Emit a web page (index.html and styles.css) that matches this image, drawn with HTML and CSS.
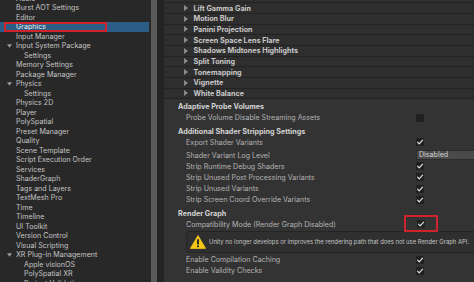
FILE: index.html
```html
<!DOCTYPE html>
<html>
<head>
<meta charset="utf-8">
<link rel="stylesheet" href="styles.css">
</head>
<body>
<nav class="sidebar">
  <ul class="tree">
    <li>Audio</li>
    <li>Burst AOT Settings</li>
    <li>Editor</li>
    <li class="sel"><span class="hl"></span>Graphics</li>
    <li>Input Manager</li>
    <li><svg class="tri" viewBox="0 0 6 4"><path d="M0 0h6L3 4z"/></svg>Input System Package</li>
    <li class="child">Settings</li>
    <li>Memory Settings</li>
    <li>Package Manager</li>
    <li><svg class="tri" viewBox="0 0 6 4"><path d="M0 0h6L3 4z"/></svg>Physics</li>
    <li class="child">Settings</li>
    <li>Physics 2D</li>
    <li>Player</li>
    <li>PolySpatial</li>
    <li>Preset Manager</li>
    <li>Quality</li>
    <li>Scene Template</li>
    <li>Script Execution Order</li>
    <li>Services</li>
    <li>ShaderGraph</li>
    <li>Tags and Layers</li>
    <li>TextMesh Pro</li>
    <li>Time</li>
    <li>Timeline</li>
    <li>UI Toolkit</li>
    <li>Version Control</li>
    <li>Visual Scripting</li>
    <li><svg class="tri" viewBox="0 0 6 4"><path d="M0 0h6L3 4z"/></svg>XR Plug-in Management</li>
    <li class="child">Apple visionOS</li>
    <li class="child">PolySpatial XR</li>
    <li class="child">Project Validation</li>
  </ul>
</nav>
<div class="scroll"><div class="thumb"></div></div>
<div class="gutter"></div>
<main class="main">
  <div class="folds">
    <div class="fold first"><svg class="rtri" viewBox="0 0 4 6"><path d="M0 0l4 3-4 3z"/></svg>Lens Distortion</div>
    <div class="fold"><svg class="rtri" viewBox="0 0 4 6"><path d="M0 0l4 3-4 3z"/></svg>Lift Gamma Gain</div>
    <div class="fold"><svg class="rtri" viewBox="0 0 4 6"><path d="M0 0l4 3-4 3z"/></svg>Motion Blur</div>
    <div class="fold"><svg class="rtri" viewBox="0 0 4 6"><path d="M0 0l4 3-4 3z"/></svg>Panini Projection</div>
    <div class="fold"><svg class="rtri" viewBox="0 0 4 6"><path d="M0 0l4 3-4 3z"/></svg>Screen Space Lens Flare</div>
    <div class="fold"><svg class="rtri" viewBox="0 0 4 6"><path d="M0 0l4 3-4 3z"/></svg>Shadows Midtones Highlights</div>
    <div class="fold"><svg class="rtri" viewBox="0 0 4 6"><path d="M0 0l4 3-4 3z"/></svg>Split Toning</div>
    <div class="fold"><svg class="rtri" viewBox="0 0 4 6"><path d="M0 0l4 3-4 3z"/></svg>Tonemapping</div>
    <div class="fold"><svg class="rtri" viewBox="0 0 4 6"><path d="M0 0l4 3-4 3z"/></svg>Vignette</div>
    <div class="fold"><svg class="rtri" viewBox="0 0 4 6"><path d="M0 0l4 3-4 3z"/></svg>White Balance</div>
  </div>

  <h3 class="head h1">Adaptive Probe Volumes</h3>
  <div class="row r-probe"><span class="lbl">Probe Volume Disable Streaming Assets</span><span class="cb"></span></div>

  <h3 class="head h2">Additional Shader Stripping Settings</h3>
  <div class="row r-export"><span class="lbl">Export Shader Variants</span><span class="cb"><svg viewBox="0 0 8 8"><path d="M1.6 4.2l1.6 1.6 3.4-3.6"/></svg></span></div>
  <div class="row r-log"><span class="lbl">Shader Variant Log Level</span><span class="dd">Disabled</span></div>
  <div class="row r11"><span class="lbl">Strip Runtime Debug Shaders</span><span class="cb"><svg viewBox="0 0 8 8"><path d="M1.6 4.2l1.6 1.6 3.4-3.6"/></svg></span></div>
  <div class="row r11"><span class="lbl">Strip Unused Post Processing Variants</span><span class="cb"><svg viewBox="0 0 8 8"><path d="M1.6 4.2l1.6 1.6 3.4-3.6"/></svg></span></div>
  <div class="row r11"><span class="lbl">Strip Unused Variants</span><span class="cb"><svg viewBox="0 0 8 8"><path d="M1.6 4.2l1.6 1.6 3.4-3.6"/></svg></span></div>
  <div class="row r11"><span class="lbl">Strip Screen Coord Override Variants</span><span class="cb"><svg viewBox="0 0 8 8"><path d="M1.6 4.2l1.6 1.6 3.4-3.6"/></svg></span></div>

  <h3 class="head h3">Render Graph</h3>
  <div class="row r-compat"><span class="lbl">Compatibility Mode (Render Graph Disabled)</span><span class="val"><span class="cb"><svg viewBox="0 0 8 8"><path d="M1.6 4.2l1.6 1.6 3.4-3.6"/></svg></span><span class="hl2"></span></span></div>
  <div class="warn">
    <svg class="wicon" viewBox="0 0 16 14"><path d="M8 0.6L15.6 13.4H0.4Z" fill="#f5c518" stroke="#f5c518" stroke-width="0.8" stroke-linejoin="round"/><rect x="7.1" y="4.3" width="1.8" height="5.2" fill="#1c1c1c"/><rect x="7.1" y="10.5" width="1.8" height="1.7" fill="#1c1c1c"/></svg>
    <span class="wtext">Unity no longer develops or improves the rendering path that does not use Render Graph API.</span>
  </div>
  <div class="row r-cache"><span class="lbl">Enable Compilation Caching</span><span class="cb"><svg viewBox="0 0 8 8"><path d="M1.6 4.2l1.6 1.6 3.4-3.6"/></svg></span></div>
  <div class="row r11"><span class="lbl">Enable Validity Checks</span><span class="cb"><svg viewBox="0 0 8 8"><path d="M1.6 4.2l1.6 1.6 3.4-3.6"/></svg></span></div>
</main>
</body>
</html>
```
FILE: styles.css
```css
* { box-sizing: border-box; margin: 0; padding: 0; }
html, body { width: 474px; height: 282px; overflow: hidden; }
body {
  display: flex;
  background: #333333;
  font-family: Inter, "Noto Sans", sans-serif;
  font-size: 7.1px;
  color: #c4c4c4;
}

/* sidebar */
.sidebar { width: 151px; flex: none; background: #282828; overflow: hidden; }
.tree { list-style: none; margin-top: -6.25px; }
.tree li {
  height: 9.5px;
  line-height: 9.5px;
  padding-left: 16px;
  white-space: nowrap;
  display: flex;
  align-items: center;
  position: relative;
}
.tree li.child { padding-left: 24px; }
.tree li.sel { background: #2c5d87; color: #ececec; margin-right: 2px; }
.tri { width: 5px; height: 4px; fill: #9a9a9a; margin-left: -9px; margin-right: 4px; }
.hl {
  position: absolute;
  left: 4px; top: -0.25px;
  width: 103px; height: 10px;
  border: 2px solid #d0232b;
}

.scroll { width: 6px; flex: none; background: #5a5a5a; }
.gutter { width: 7px; flex: none; background: #232323; }

/* main */
.main { flex: 1; background: #333333; overflow: hidden; }
.fold {
  height: 10.67px;
  border-bottom: 1px solid #222222;
  background: #2e2e2e;
  display: flex;
  align-items: center;
  padding-left: 20px;
  font-size: 7.2px;
  font-weight: 700;
  color: #c8c8c8;
  white-space: nowrap;
}
.fold.first { margin-top: -7.37px; }
.rtri { width: 4px; height: 6px; fill: #8a8a8a; margin-right: 5.5px; flex: none; }

.head {
  font-size: 7.2px;
  font-weight: 700;
  color: #d4d4d4;
  padding-left: 14px;
  height: 10.5px;
  line-height: 10.5px;
  white-space: nowrap;
}
.h1 { margin-top: 2.77px; }
.h2 { margin-top: 3.6px; height: 10px; line-height: 10px; }
.h3 { margin-top: 3.8px; height: 10px; line-height: 10px; }

.row {
  display: grid;
  grid-template-columns: 252px 1fr;
  align-items: center;
  white-space: nowrap;
  color: #b4b4b4;
}
.lbl { padding-left: 22px; }
.r-probe { height: 11px; }
.r-export { height: 10.8px; }
.r-log { height: 12.7px; padding-top: 2.5px; }
.r11 { height: 11.2px; }
.r-compat { height: 10.4px; }
.r-cache { height: 11px; margin-top: 1.5px; }

.cb {
  width: 8px; height: 8px;
  background: #202020;
  border-radius: 1px;
  display: flex;
  align-items: center;
  justify-content: center;
}
.cb svg { width: 8px; height: 8px; fill: none; stroke: #e2e2e2; stroke-width: 1.2; stroke-linecap: round; stroke-linejoin: round; }
.val { position: relative; display: flex; }
.val .cb { margin-left: 1px; }
.hl2 {
  position: absolute;
  left: -12px; top: -4.8px;
  width: 34px; height: 17px;
  border: 2px solid #d0232b;
}

.dd {
  height: 10px;
  width: 80px;
  background: #4a4a4a;
  border: 1px solid #2c2c2c;
  border-radius: 2px;
  color: #d4d4d4;
  padding-left: 2px;
  line-height: 8px;
}

.warn {
  margin: 1.3px -10px 0 22px;
  height: 22px;
  background: #2f2f2f;
  border: 1px solid #242424;
  border-radius: 3px;
  display: flex;
  align-items: center;
  padding-left: 3px;
  gap: 3px;
  white-space: nowrap;
}
.wicon { width: 16px; height: 14px; flex: none; }
.wtext { font-size: 5.9px; color: #c4c4c4; }
```
